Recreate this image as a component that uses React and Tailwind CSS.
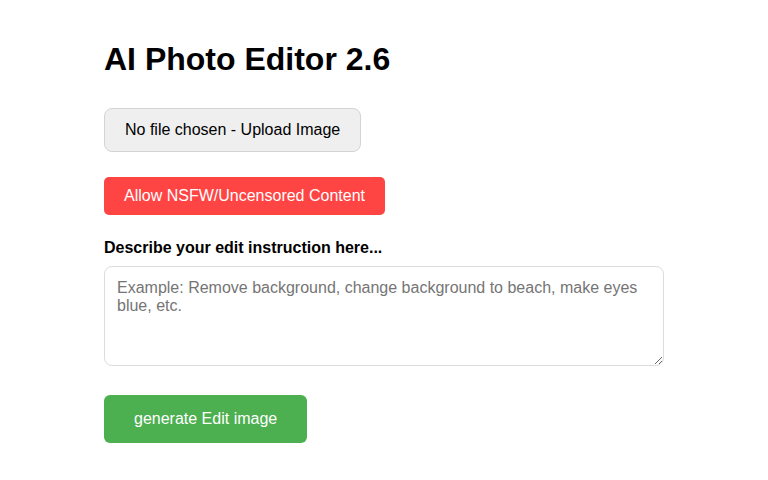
export default function App() {
  return (
    <div className="min-h-screen bg-white font-['Liberation_Sans',Arial,sans-serif] text-black">
      <div className="mx-auto max-w-[600px] px-5 pt-5 pb-5">
        <h1 className="mt-[21px] text-[32px] leading-[37px] font-bold">AI Photo Editor 2.6</h1>

        <div className="mt-[30px]">
          <button className="rounded-lg border border-[#d4d4d4] bg-[#efefef] px-5 py-3 text-base leading-[18px] text-black">
            No file chosen - Upload Image
          </button>
        </div>

        <div className="mt-[25px]">
          <button className="rounded-[5px] bg-[#ff4444] px-5 py-[10px] text-base leading-[18px] text-white">
            Allow NSFW/Uncensored Content
          </button>
        </div>

        <label className="mt-6 block text-base leading-[18px] font-bold">Describe your edit instruction here...</label>
        <textarea
          className="mt-[9px] block h-[100px] w-full rounded-lg border border-[#dcdcdc] px-3 py-3 text-base leading-[18px] text-black placeholder:text-[#757575] focus:outline-none"
          placeholder="Example: Remove background, change background to beach, make eyes blue, etc."
        />

        <div className="mt-[29px]">
          <button className="rounded-md bg-[#4caf50] px-[30px] py-[15px] text-base leading-[18px] text-white">
            generate Edit image
          </button>
        </div>
      </div>
    </div>
  );
}
